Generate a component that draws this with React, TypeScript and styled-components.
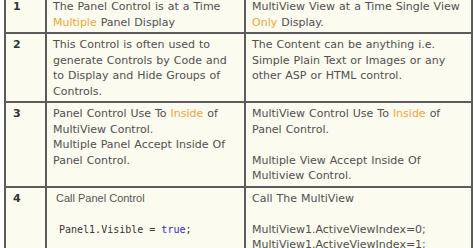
import React from 'react';
import styled, { createGlobalStyle } from 'styled-components';

const GlobalStyle = createGlobalStyle`
  html, body {
    margin: 0;
    padding: 0;
    background: #ffffff;
  }
  body {
    width: 474px;
    height: 248px;
    overflow: hidden;
  }
`;

// Comparison table between Panel and MultiView
const Table = styled.table`
  margin: -6px 0 0 4px;
  width: 467px;
  table-layout: fixed;
  border-collapse: collapse;
  background-color: #fcfbef;
  border: 2px solid #5c5c5c;
  font-family: 'DejaVu Sans', Verdana, sans-serif;
  font-size: 11px;
  line-height: 15.5px;
  color: #4f4f4f;
  word-spacing: 0.5px;
`;

const Cell = styled.td`
  border: 2px solid #5c5c5c;
  padding: 3px 6px 2px 6px;
  vertical-align: top;
`;

const NumCell = styled(Cell)`
  padding-left: 7px;
  font-weight: bold;
  color: #333;
`;

const Hi = styled.span`
  color: #f2a43a;
`;

const Line = styled.div<{ $blank?: boolean }>`
  min-height: ${(p) => (p.$blank ? '15.5px' : 'auto')};
`;

const PlainNote = styled.div`
  padding-left: 3px;
  font-family: 'Liberation Sans', Arial, sans-serif;
  font-size: 11px;
  word-spacing: 0;
  color: #555;
`;

const Code = styled.div`
  padding-left: 6px;
  font-family: 'DejaVu Sans Mono', Consolas, monospace;
  font-size: 10px;
  word-spacing: 0;
  color: #333;
  white-space: pre;
`;

const Keyword = styled.span`
  color: #2a2ae0;
`;

export default function App() {
  return (
    <>
      <GlobalStyle />
      <Table>
        <colgroup>
          <col style={{ width: 41 }} />
          <col style={{ width: 199 }} />
          <col style={{ width: 227 }} />
        </colgroup>
        <tbody>
          <tr>
            <NumCell>1</NumCell>
            <Cell>
              The Panel Control is at a Time <Hi>Multiple</Hi> Panel Display
            </Cell>
            <Cell>
              MultiView View at a Time Single View <Hi>Only</Hi> Display.
            </Cell>
          </tr>
          <tr>
            <NumCell>2</NumCell>
            <Cell>
              This Control is often used to generate Controls by Code and to
              Display and Hide Groups of Controls.
            </Cell>
            <Cell>
              The Content can be anything i.e. Simple Plain Text or Images or
              any other ASP or HTML control.
            </Cell>
          </tr>
          <tr>
            <NumCell>3</NumCell>
            <Cell>
              <Line>
                Panel Control Use To <Hi>Inside</Hi> of MultiView Control.
              </Line>
              <Line>Multiple Panel Accept Inside Of Panel Control.</Line>
            </Cell>
            <Cell>
              <Line>
                MultiView Control Use To <Hi>Inside</Hi> of Panel Control.
              </Line>
              <Line $blank />
              <Line>Multiple View Accept Inside Of Multiview Control.</Line>
            </Cell>
          </tr>
          <tr>
            <NumCell>4</NumCell>
            <Cell>
              <PlainNote>Call Panel Control</PlainNote>
              <Line $blank />
              <Code>
                Panel1.Visible = <Keyword>true</Keyword>;
              </Code>
            </Cell>
            <Cell>
              <Line>Call The MultiView</Line>
              <Line $blank />
              <Line>MultiView1.ActiveViewIndex=0;</Line>
              <Line>MultiView1.ActiveViewIndex=1;</Line>
            </Cell>
          </tr>
        </tbody>
      </Table>
    </>
  );
}
